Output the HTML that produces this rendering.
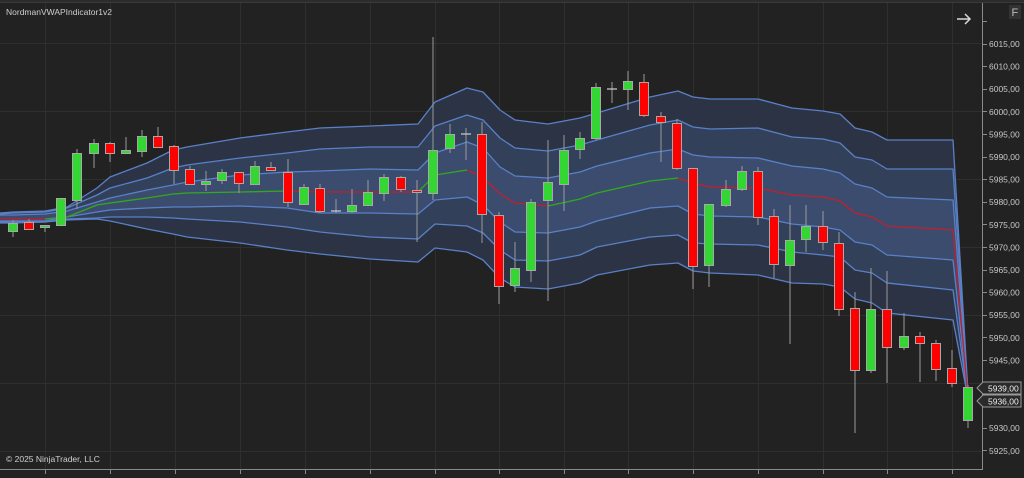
<!DOCTYPE html>
<html><head><meta charset="utf-8"><style>
html,body{margin:0;padding:0;background:#222;width:1024px;height:478px;overflow:hidden}
svg{display:block}
text{font-family:"Liberation Sans",sans-serif}
</style></head><body>
<svg width="1024" height="478" viewBox="0 0 1024 478" xmlns="http://www.w3.org/2000/svg">
<rect width="1024" height="478" fill="#222"/>
<rect x="0" y="0" width="1024" height="2" fill="#2c2c2c"/>
<line x1="0" y1="2.5" x2="1024" y2="2.5" stroke="#3a3a3a"/>
<g stroke="#2f2f2f" stroke-width="1">
<line x1="45.5" y1="3" x2="45.5" y2="469"/><line x1="110.5" y1="3" x2="110.5" y2="469"/><line x1="175.5" y1="3" x2="175.5" y2="469"/><line x1="240.5" y1="3" x2="240.5" y2="469"/><line x1="305.5" y1="3" x2="305.5" y2="469"/><line x1="370.5" y1="3" x2="370.5" y2="469"/><line x1="435.5" y1="3" x2="435.5" y2="469"/><line x1="499.5" y1="3" x2="499.5" y2="469"/><line x1="564.5" y1="3" x2="564.5" y2="469"/><line x1="628.5" y1="3" x2="628.5" y2="469"/><line x1="693.5" y1="3" x2="693.5" y2="469"/><line x1="758.5" y1="3" x2="758.5" y2="469"/><line x1="823.5" y1="3" x2="823.5" y2="469"/><line x1="887.5" y1="3" x2="887.5" y2="469"/><line x1="952.5" y1="3" x2="952.5" y2="469"/>
<line x1="0" y1="43.5" x2="982" y2="43.5"/><line x1="0" y1="111.5" x2="982" y2="111.5"/><line x1="0" y1="179.5" x2="982" y2="179.5"/><line x1="0" y1="247.5" x2="982" y2="247.5"/><line x1="0" y1="315.5" x2="982" y2="315.5"/><line x1="0" y1="383.5" x2="982" y2="383.5"/><line x1="0" y1="451.5" x2="982" y2="451.5"/>
</g>
<!-- band fills -->
<polygon fill="#2b3345" points="0,213 13,212 45,211 67,207 97,188 110,177 147,163 173,150 187,147 240,138 287,132 320,128 370,126 418,124 435,102 467,88 483,92 500,110 515,120 548,124 580,118 597,113 650,97 678,91 693,97 710,99 758,99 792,108 823,111 840,114 855,128 872,132 887,140 953,140 968,393 953,320 887,313 872,303 855,299 840,287 823,284 792,283 758,275 710,273 693,271 678,263 650,265 597,275 580,283 548,289 515,287 500,278 483,260 467,252 435,248 418,262 370,259 320,254 287,250 240,243 187,237 173,234 147,229 110,221 97,219 67,220 45,222 13,223 0,223"/>
<polygon fill="#334059" points="0,214 13,213 45,212 67,208 97,195 110,188 147,178 173,168 187,165 240,158 287,153 320,149 370,147 418,147 435,126 467,115 483,120 500,138 515,148 548,151 580,145 597,140 650,125 678,120 693,127 710,129 758,128 792,137 823,139 840,143 855,157 872,160 887,169 953,169 968,394 953,290 887,283 872,273 855,270 840,257 823,255 792,252 758,245 710,244 693,243 678,235 650,237 597,247 580,255 548,261 515,260 500,250 483,233 467,226 435,224 418,239 370,237 320,232 287,227 240,222 187,219 173,218 147,217 110,217 97,218 67,219 45,222 13,222 0,222"/>
<polygon fill="#3c4c6e" points="0,215 13,215 45,214 67,211 97,202 110,198 147,190 173,185 187,182 240,175 287,172 320,171 370,169 418,170 435,153 467,142 483,148 500,167 515,176 548,178 580,172 597,166 650,153 678,149 693,155 710,157 758,158 792,166 823,169 840,173 855,184 872,188 887,197 953,200 968,395 953,260 887,255 872,245 855,242 840,230 823,227 792,224 758,217 710,216 693,214 678,206 650,208 597,221 580,227 548,233 515,232 500,222 483,205 467,197 435,200 418,214 370,213 320,213 287,208 240,206 187,207 173,207 147,208 110,210 97,212 67,217 45,221 13,221 0,221"/>
<g fill="none" stroke="#5a80c8" stroke-width="1.3" stroke-linejoin="round">
<polyline points="0,213 13,212 45,211 67,207 97,188 110,177 147,163 173,150 187,147 240,138 287,132 320,128 370,126 418,124 435,102 467,88 483,92 500,110 515,120 548,124 580,118 597,113 650,97 678,91 693,97 710,99 758,99 792,108 823,111 840,114 855,128 872,132 887,140 953,140 968,393"/>
<polyline points="0,214 13,213 45,212 67,208 97,195 110,188 147,178 173,168 187,165 240,158 287,153 320,149 370,147 418,147 435,126 467,115 483,120 500,138 515,148 548,151 580,145 597,140 650,125 678,120 693,127 710,129 758,128 792,137 823,139 840,143 855,157 872,160 887,169 953,169 968,394"/>
<polyline points="0,215 13,215 45,214 67,211 97,202 110,198 147,190 173,185 187,182 240,175 287,172 320,171 370,169 418,170 435,153 467,142 483,148 500,167 515,176 548,178 580,172 597,166 650,153 678,149 693,155 710,157 758,158 792,166 823,169 840,173 855,184 872,188 887,197 953,200 968,395"/>
<polyline points="0,221 13,221 45,221 67,217 97,212 110,210 147,208 173,207 187,207 240,206 287,208 320,213 370,213 418,214 435,200 467,197 483,205 500,222 515,232 548,233 580,227 597,221 650,208 678,206 693,214 710,216 758,217 792,224 823,227 840,230 855,242 872,245 887,255 953,260 968,398"/>
<polyline points="0,222 13,222 45,222 67,219 97,218 110,217 147,217 173,218 187,219 240,222 287,227 320,232 370,237 418,239 435,224 467,226 483,233 500,250 515,260 548,261 580,255 597,247 650,237 678,235 693,243 710,244 758,245 792,252 823,255 840,257 855,270 872,273 887,283 953,290 968,398"/>
<polyline points="0,223 13,223 45,222 67,220 97,219 110,221 147,229 173,234 187,237 240,243 287,250 320,254 370,259 418,262 435,248 467,252 483,260 500,278 515,287 548,289 580,283 597,275 650,265 678,263 693,271 710,273 758,275 792,283 823,284 840,287 855,299 872,303 887,313 953,320 968,398"/>
</g>
<g fill="none" stroke-width="1.3">
<polyline stroke="#c0202c" points="0,219 13,219 45,219 67,217 97,205 110,203 147,198 173,194 187,193 240,192 287,191 320,192 370,192 418,192 435,175 467,170 483,177 500,194 515,203 548,206 580,199 597,193 650,181 678,178 693,183 710,187 758,188 792,195 823,197 840,201 855,213 872,217 887,226 953,230 968,398"/>
<polyline stroke="#22b022" points="45,219 67,217 97,205 110,203 147,198 173,194 187,193 240,192 287,191"/>
<polyline stroke="#22b022" points="418,192 435,175 467,170"/>
<polyline stroke="#22b022" points="548,206 580,199 597,193 650,181 678,178"/>
</g>
<!-- candles -->
<g id="c" stroke-width="1">
<g stroke="#9a9a9a">
<line x1="13" y1="220" x2="13" y2="237"/><line x1="29" y1="219" x2="29" y2="229"/><line x1="45" y1="225" x2="45" y2="232"/><line x1="61" y1="198" x2="61" y2="226"/><line x1="77" y1="149" x2="77" y2="209"/><line x1="94" y1="139" x2="94" y2="168"/><line x1="110" y1="142" x2="110" y2="162"/><line x1="126" y1="137" x2="126" y2="153"/><line x1="142" y1="130" x2="142" y2="157"/><line x1="158" y1="127" x2="158" y2="148"/><line x1="174" y1="145" x2="174" y2="184"/><line x1="190" y1="166" x2="190" y2="184"/><line x1="206" y1="171" x2="206" y2="191"/><line x1="222" y1="169" x2="222" y2="184"/><line x1="239" y1="172" x2="239" y2="193"/><line x1="255" y1="161" x2="255" y2="184"/><line x1="271" y1="162" x2="271" y2="171"/><line x1="288" y1="159" x2="288" y2="207"/><line x1="304" y1="184" x2="304" y2="204"/><line x1="320" y1="184" x2="320" y2="213"/><line x1="336" y1="199" x2="336" y2="213"/><line x1="352" y1="189" x2="352" y2="213"/><line x1="368" y1="180" x2="368" y2="206"/><line x1="384" y1="174" x2="384" y2="201"/><line x1="401" y1="176" x2="401" y2="192"/><line x1="417" y1="180" x2="417" y2="242"/><line x1="433" y1="37" x2="433" y2="200"/><line x1="450" y1="124" x2="450" y2="153"/><line x1="466" y1="128" x2="466" y2="160"/><line x1="482" y1="122" x2="482" y2="243"/><line x1="499" y1="212" x2="499" y2="304"/><line x1="515" y1="242" x2="515" y2="292"/><line x1="531" y1="199" x2="531" y2="282"/><line x1="548" y1="140" x2="548" y2="301"/><line x1="564" y1="135" x2="564" y2="211"/><line x1="580" y1="132" x2="580" y2="159"/><line x1="596" y1="83" x2="596" y2="140"/><line x1="612" y1="82" x2="612" y2="103"/><line x1="628" y1="71" x2="628" y2="110"/><line x1="644" y1="74" x2="644" y2="117"/><line x1="661" y1="112" x2="661" y2="162"/><line x1="677" y1="119" x2="677" y2="170"/><line x1="693" y1="168" x2="693" y2="289"/><line x1="709" y1="204" x2="709" y2="287"/><line x1="726" y1="180" x2="726" y2="207"/><line x1="742" y1="166" x2="742" y2="191"/><line x1="758" y1="167" x2="758" y2="225"/><line x1="774" y1="209" x2="774" y2="278"/><line x1="790" y1="205" x2="790" y2="344"/><line x1="806" y1="205" x2="806" y2="252"/><line x1="823" y1="211" x2="823" y2="250"/><line x1="839" y1="232" x2="839" y2="316"/><line x1="855" y1="292" x2="855" y2="433"/><line x1="871" y1="268" x2="871" y2="373"/><line x1="887" y1="271" x2="887" y2="383"/><line x1="904" y1="313" x2="904" y2="350"/><line x1="920" y1="332" x2="920" y2="382"/><line x1="936" y1="340" x2="936" y2="381"/><line x1="952" y1="350" x2="952" y2="387"/><line x1="968" y1="385" x2="968" y2="428"/>
</g>
<g stroke="#a8a8a8">
<g fill="#33d633">
<rect x="8.5" y="223.5" width="9" height="8"/><rect x="40.5" y="225.5" width="9" height="2"/><rect x="56.5" y="198.5" width="9" height="27"/><rect x="72.5" y="153.5" width="9" height="47"/><rect x="89.5" y="143.5" width="9" height="10"/><rect x="121.5" y="150.5" width="9" height="3"/><rect x="137.5" y="136.5" width="9" height="15"/><rect x="201.5" y="181.5" width="9" height="3"/><rect x="217.5" y="172.5" width="9" height="8"/><rect x="250.5" y="166.5" width="9" height="18"/><rect x="299.5" y="187.5" width="9" height="17"/><rect x="347.5" y="205.5" width="9" height="6"/><rect x="363.5" y="192.5" width="9" height="13"/><rect x="379.5" y="177.5" width="9" height="16"/><rect x="428.5" y="150.5" width="9" height="43"/><rect x="445.5" y="134.5" width="9" height="14"/><rect x="510.5" y="268.5" width="9" height="17"/><rect x="526.5" y="202.5" width="9" height="68"/><rect x="543.5" y="182.5" width="9" height="18"/><rect x="559.5" y="150.5" width="9" height="34"/><rect x="575.5" y="138.5" width="9" height="11"/><rect x="591.5" y="87.5" width="9" height="51"/><rect x="623.5" y="81.5" width="9" height="8"/><rect x="704.5" y="204.5" width="9" height="61"/><rect x="721.5" y="189.5" width="9" height="16"/><rect x="737.5" y="171.5" width="9" height="18"/><rect x="785.5" y="240.5" width="9" height="25"/><rect x="801.5" y="226.5" width="9" height="13"/><rect x="866.5" y="309.5" width="9" height="61"/><rect x="899.5" y="336.5" width="9" height="11"/><rect x="963.5" y="387.5" width="9" height="33"/>
</g>
<g fill="#ff0000">
<rect x="24.5" y="222.5" width="9" height="7"/><rect x="105.5" y="143.5" width="9" height="10"/><rect x="153.5" y="136.5" width="9" height="11"/><rect x="169.5" y="146.5" width="9" height="24"/><rect x="185.5" y="169.5" width="9" height="15"/><rect x="234.5" y="172.5" width="9" height="11"/><rect x="266.5" y="167.5" width="9" height="3"/><rect x="283.5" y="172.5" width="9" height="30"/><rect x="315.5" y="188.5" width="9" height="23"/><rect x="396.5" y="177.5" width="9" height="12"/><rect x="412.5" y="190.5" width="9" height="2"/><rect x="477.5" y="134.5" width="9" height="80"/><rect x="494.5" y="215.5" width="9" height="71"/><rect x="639.5" y="82.5" width="9" height="33"/><rect x="656.5" y="116.5" width="9" height="6"/><rect x="672.5" y="123.5" width="9" height="45"/><rect x="688.5" y="168.5" width="9" height="98"/><rect x="753.5" y="171.5" width="9" height="46"/><rect x="769.5" y="216.5" width="9" height="48"/><rect x="818.5" y="226.5" width="9" height="16"/><rect x="834.5" y="243.5" width="9" height="66"/><rect x="850.5" y="308.5" width="9" height="62"/><rect x="882.5" y="309.5" width="9" height="38"/><rect x="915.5" y="336.5" width="9" height="7"/><rect x="931.5" y="343.5" width="9" height="26"/><rect x="947.5" y="368.5" width="9" height="15"/>
</g>
</g>
<g stroke="#cfcfcf" stroke-width="1.2">
<line x1="331" y1="211" x2="341" y2="211"/><line x1="461" y1="134" x2="471" y2="134"/><line x1="607" y1="89" x2="617" y2="89"/>
</g>
</g>
<!-- axes -->
<line x1="982.5" y1="3" x2="982.5" y2="470" stroke="#8a8a8a"/>
<line x1="0" y1="469.5" x2="983" y2="469.5" stroke="#8a8a8a"/>
<g stroke="#8a8a8a">
<line x1="45.5" y1="470" x2="45.5" y2="474"/><line x1="110.5" y1="470" x2="110.5" y2="474"/><line x1="175.5" y1="470" x2="175.5" y2="474"/><line x1="240.5" y1="470" x2="240.5" y2="474"/><line x1="305.5" y1="470" x2="305.5" y2="474"/><line x1="370.5" y1="470" x2="370.5" y2="474"/><line x1="435.5" y1="470" x2="435.5" y2="474"/><line x1="499.5" y1="470" x2="499.5" y2="474"/><line x1="564.5" y1="470" x2="564.5" y2="474"/><line x1="628.5" y1="470" x2="628.5" y2="474"/><line x1="693.5" y1="470" x2="693.5" y2="474"/><line x1="758.5" y1="470" x2="758.5" y2="474"/><line x1="823.5" y1="470" x2="823.5" y2="474"/><line x1="887.5" y1="470" x2="887.5" y2="474"/><line x1="952.5" y1="470" x2="952.5" y2="474"/>
<line x1="983" y1="21.5" x2="987" y2="21.5"/><line x1="983" y1="44.5" x2="987" y2="44.5"/><line x1="983" y1="66.5" x2="987" y2="66.5"/><line x1="983" y1="89.5" x2="987" y2="89.5"/><line x1="983" y1="111.5" x2="987" y2="111.5"/><line x1="983" y1="134.5" x2="987" y2="134.5"/><line x1="983" y1="157.5" x2="987" y2="157.5"/><line x1="983" y1="179.5" x2="987" y2="179.5"/><line x1="983" y1="202.5" x2="987" y2="202.5"/><line x1="983" y1="224.5" x2="987" y2="224.5"/><line x1="983" y1="247.5" x2="987" y2="247.5"/><line x1="983" y1="270.5" x2="987" y2="270.5"/><line x1="983" y1="292.5" x2="987" y2="292.5"/><line x1="983" y1="315.5" x2="987" y2="315.5"/><line x1="983" y1="337.5" x2="987" y2="337.5"/><line x1="983" y1="360.5" x2="987" y2="360.5"/><line x1="983" y1="428.5" x2="987" y2="428.5"/><line x1="983" y1="450.5" x2="987" y2="450.5"/>
</g>
<g fill="#c8c8c8" font-size="8.5">
<text x="989" y="47">6015,00</text><text x="989" y="69.6">6010,00</text><text x="989" y="92.2">6005,00</text><text x="989" y="114.8">6000,00</text><text x="989" y="137.4">5995,00</text><text x="989" y="160">5990,00</text><text x="989" y="182.6">5985,00</text><text x="989" y="205.2">5980,00</text><text x="989" y="227.8">5975,00</text><text x="989" y="250.4">5970,00</text><text x="989" y="273">5965,00</text><text x="989" y="295.6">5960,00</text><text x="989" y="318.2">5955,00</text><text x="989" y="340.8">5950,00</text><text x="989" y="363.4">5945,00</text><text x="989" y="431.2">5930,00</text><text x="989" y="453.8">5925,00</text>
</g>
<g stroke="#9a9a9a" fill="#2a2a2a">
<polygon points="977,388 983,382 1021,382 1021,394 983,394"/>
<polygon points="977,401 983,395 1021,395 1021,407 983,407"/>
</g>
<g fill="#f0f0f0" font-size="8.5"><text x="988" y="391.5">5939,00</text><text x="988" y="404.5">5936,00</text></g>
<rect x="1009" y="5" width="12" height="14" fill="#333"/>
<text x="1011.5" y="16" fill="#bbb" font-size="11">F</text>
<g stroke="#d8d8d8" stroke-width="1.5" fill="none"><line x1="957" y1="19" x2="970" y2="19"/><polyline points="965,14 970,19 965,24"/></g>
<text x="6" y="15" fill="#cfcfcf" font-size="8.5">NordmanVWAPIndicator1v2</text>
<text x="6" y="462" fill="#cfcfcf" font-size="8.5">© 2025 NinjaTrader, LLC</text>
</svg>
</body></html>
